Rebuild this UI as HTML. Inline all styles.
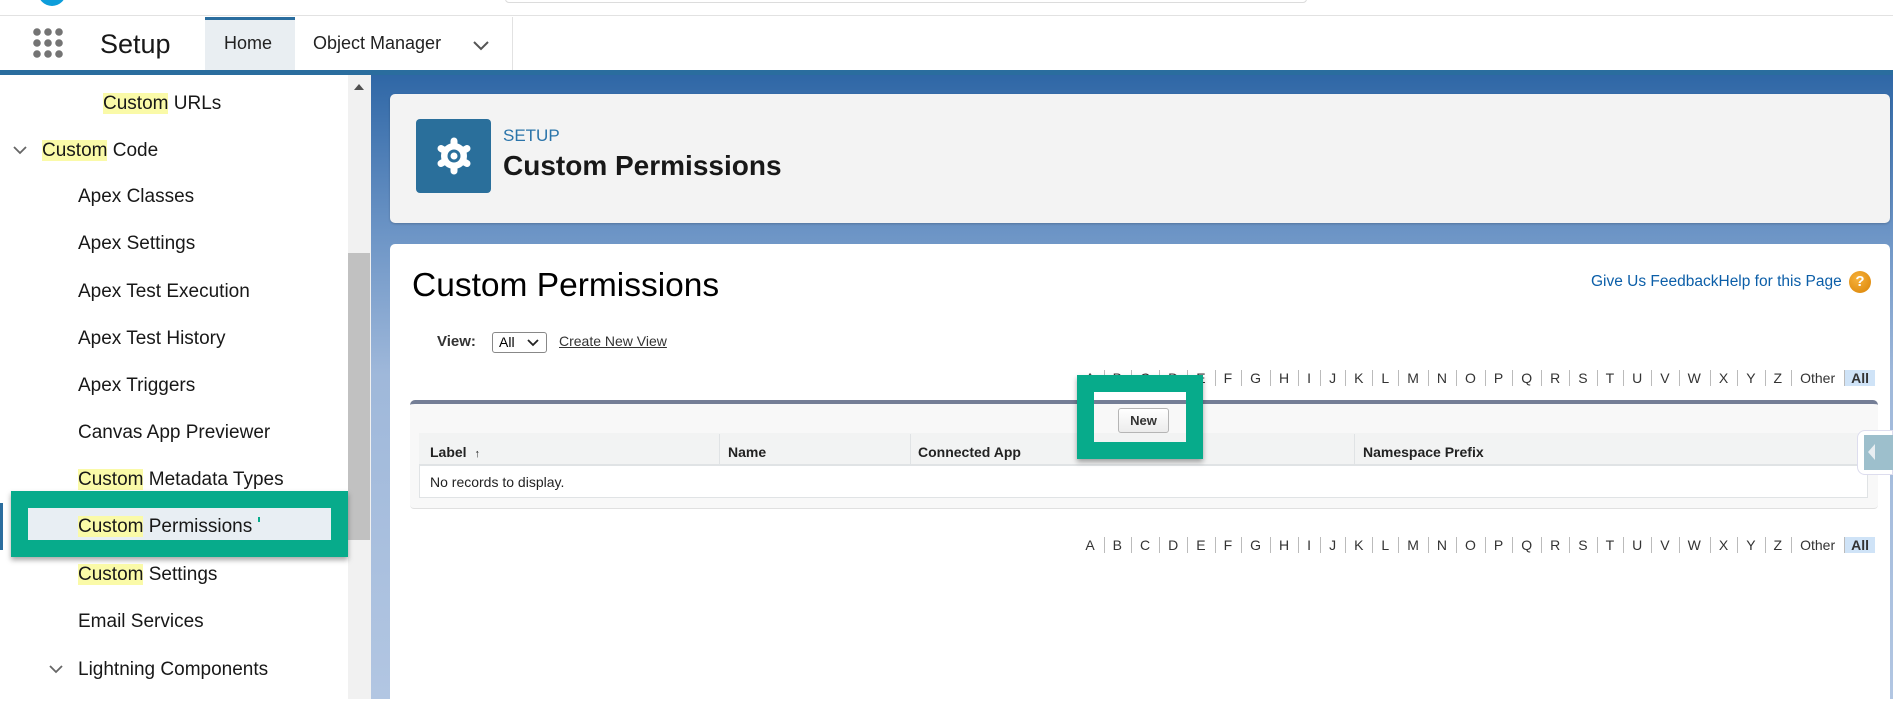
<!DOCTYPE html>
<html><head><meta charset="utf-8"><style>
*{margin:0;padding:0;box-sizing:border-box}
body{width:1893px;height:699px;overflow:hidden;position:relative;font-family:"Liberation Sans",Arial,sans-serif;background:#fff}
.a{position:absolute}
.side{font-size:19px;color:#181818;white-space:nowrap;line-height:24px}
.hl{background:#fafaa8}
.alpha{font-size:14px;color:#333;white-space:nowrap;line-height:20px}
.alpha span{padding:0 9px 0 8px;border-right:1px solid #bbb}
.alpha span:last-child{border:none;background:#cfe3f7;font-weight:bold;padding:0 6px}
.th{font-size:14px;font-weight:bold;color:#222;top:444px;line-height:16px}
</style></head><body>
<div class="a" style="left:0;top:0;width:1893px;height:16px;background:#fff;border-bottom:1px solid #e2e2e2"></div>
<div class="a" style="left:38px;top:-22px;width:28px;height:28px;border-radius:50%;background:#0d9dda"></div>
<div class="a" style="left:505px;top:-10px;width:802px;height:13px;border:1px solid #dcdcdc;border-radius:4px"></div>
<div class="a" style="left:0;top:70px;width:1893px;height:5px;background:#2a6d9e"></div>
<svg class="a" style="left:33px;top:28px" width="32" height="32">
<g fill="#747474"><circle cx="4" cy="4" r="3.8"/><circle cx="15" cy="4" r="3.8"/><circle cx="26" cy="4" r="3.8"/><circle cx="4" cy="15" r="3.8"/><circle cx="15" cy="15" r="3.8"/><circle cx="26" cy="15" r="3.8"/><circle cx="4" cy="26" r="3.8"/><circle cx="15" cy="26" r="3.8"/><circle cx="26" cy="26" r="3.8"/></g></svg>
<div class="a" style="left:100px;top:29px;font-size:27px;color:#181818">Setup</div>
<div class="a" style="left:205px;top:17px;width:90px;height:53px;background:#e9eef2;border-top:3px solid #2a6d9e"></div>
<div class="a" style="left:224px;top:33px;font-size:18px;color:#222">Home</div>
<div class="a" style="left:313px;top:33px;font-size:18px;color:#222">Object Manager</div>
<svg class="a" style="left:472px;top:40px" width="18" height="12"><path d="M2 2 L9 9 L16 2" fill="none" stroke="#555" stroke-width="2"/></svg>
<div class="a" style="left:512px;top:17px;width:1px;height:53px;background:#e2e2e2"></div>
<div class="a" style="left:371px;top:75px;width:1522px;height:624px;background:linear-gradient(#2f67a6 0px,#6d95c6 160px,#9fb8da 300px,#b2c6e2 624px)"></div>
<div class="a" style="left:0;top:75px;width:371px;height:624px;background:#fff"></div>
<div class="a" style="left:348px;top:75px;width:23px;height:624px;background:#f1f1f1"></div>
<div class="a" style="left:348px;top:253px;width:22px;height:287px;background:#c1c1c1"></div>
<svg class="a" style="left:353px;top:82px" width="12" height="10"><path d="M1 8 L6 2 L11 8Z" fill="#505050"/></svg>
<div class="a side" style="left:103px;top:92px"><span class="hl">Custom</span> URLs</div>
<svg class="a" style="left:12px;top:145px" width="16" height="12"><path d="M2 2 L8 8 L14 2" fill="none" stroke="#666" stroke-width="1.8"/></svg>
<div class="a side" style="left:42px;top:139px"><span class="hl">Custom</span> Code</div>
<div class="a side" style="left:78px;top:185px">Apex Classes</div>
<div class="a side" style="left:78px;top:232px">Apex Settings</div>
<div class="a side" style="left:78px;top:280px">Apex Test Execution</div>
<div class="a side" style="left:78px;top:327px">Apex Test History</div>
<div class="a side" style="left:78px;top:374px">Apex Triggers</div>
<div class="a side" style="left:78px;top:421px">Canvas App Previewer</div>
<div class="a side" style="left:78px;top:468px"><span class="hl">Custom</span> Metadata Types</div>
<div class="a" style="left:0;top:503px;width:3px;height:47px;background:#2a6d9e"></div>
<div class="a" style="left:11px;top:491px;width:337px;height:66px;border:17px solid #07ab8b;background:#e8eef3;box-shadow:0 3px 5px rgba(0,0,0,.35)"></div>
<div class="a side" style="left:78px;top:515px"><span class="hl">Custom</span> Permissions</div>
<div class="a" style="left:258px;top:517px;width:2px;height:5px;background:#07ab8b"></div>
<div class="a side" style="left:78px;top:563px"><span class="hl">Custom</span> Settings</div>
<div class="a side" style="left:78px;top:610px">Email Services</div>
<svg class="a" style="left:48px;top:664px" width="16" height="12"><path d="M2 2 L8 8 L14 2" fill="none" stroke="#666" stroke-width="1.8"/></svg>
<div class="a side" style="left:78px;top:658px">Lightning Components</div>
<div class="a" style="left:390px;top:94px;width:1500px;height:129px;background:#f3f3f3;border-radius:5px;box-shadow:0 1px 2px rgba(0,0,0,.2)"></div>
<div class="a" style="left:416px;top:119px;width:75px;height:74px;background:#2a6f9b;border-radius:4px"></div>
<svg class="a" style="left:432px;top:134px" width="44" height="44" viewBox="0 0 44 44">
<g fill="#fff"><circle cx="22" cy="22" r="13"/>
<g stroke="#fff" stroke-width="7" stroke-linecap="round"><path d="M22 7 V10"/><path d="M22 34 V37"/><path d="M9 14.5 L11.6 16"/><path d="M32.4 28 L35 29.5"/><path d="M9 29.5 L11.6 28"/><path d="M32.4 16 L35 14.5"/></g></g>
<circle cx="22" cy="22" r="6.5" fill="#2a6f9b"/><circle cx="22" cy="22" r="3.5" fill="#fff"/></svg>
<div class="a" style="left:503px;top:126px;font-size:17px;color:#2a74aa">SETUP</div>
<div class="a" style="left:503px;top:150px;font-size:28px;font-weight:bold;color:#181818">Custom Permissions</div>
<div class="a" style="left:390px;top:244px;width:1500px;height:460px;background:#fff;border-radius:5px"></div>
<div class="a" style="left:412px;top:267px;font-size:33.5px;color:#000">Custom Permissions</div>
<div class="a" style="left:1591px;top:273px;font-size:15.5px;color:#0b5ea8">Give Us FeedbackHelp for this Page</div>
<div class="a" style="left:1849px;top:271px;width:22px;height:22px;border-radius:50%;background:radial-gradient(circle at 40% 35%,#f7b23c,#d98204);color:#fff;font-size:15px;font-weight:bold;text-align:center;line-height:22px">?</div>
<div class="a" style="left:437px;top:333px;font-size:15px;font-weight:bold;color:#333">View:</div>
<div class="a" style="left:492px;top:332px;width:55px;height:21px;border:1px solid #888;border-radius:3px;font-size:14px;padding-left:6px;line-height:19px">All</div>
<svg class="a" style="left:526px;top:338px" width="14" height="10"><path d="M2 2 L7 7 L12 2" fill="none" stroke="#222" stroke-width="1.8"/></svg>
<div class="a" style="left:559px;top:333px;font-size:14px;color:#333;text-decoration:underline">Create New View</div>
<div class="a alpha" style="right:18px;top:368px"><span>A</span><span>B</span><span>C</span><span>D</span><span>E</span><span>F</span><span>G</span><span>H</span><span>I</span><span>J</span><span>K</span><span>L</span><span>M</span><span>N</span><span>O</span><span>P</span><span>Q</span><span>R</span><span>S</span><span>T</span><span>U</span><span>V</span><span>W</span><span>X</span><span>Y</span><span>Z</span><span>Other</span><span>All</span></div>
<div class="a alpha" style="right:18px;top:535px"><span>A</span><span>B</span><span>C</span><span>D</span><span>E</span><span>F</span><span>G</span><span>H</span><span>I</span><span>J</span><span>K</span><span>L</span><span>M</span><span>N</span><span>O</span><span>P</span><span>Q</span><span>R</span><span>S</span><span>T</span><span>U</span><span>V</span><span>W</span><span>X</span><span>Y</span><span>Z</span><span>Other</span><span>All</span></div>
<div class="a" style="left:410px;top:400px;width:1468px;height:109px;background:#f8f8f8;border-top:4px solid #747e96;border-radius:5px 5px 4px 4px;border-bottom:1px solid #e0e0e0"></div>
<div class="a" style="left:1118px;top:408px;width:51px;height:25px;border:1px solid #b5b5b5;border-radius:3px;background:linear-gradient(#fff,#ececec);font-size:13px;font-weight:bold;text-align:center;line-height:23px;color:#333">New</div>
<div class="a" style="left:419px;top:433px;width:1449px;height:65px;border:1px solid #e0e3e5;background:#fff"></div>
<div class="a" style="left:419px;top:433px;width:1449px;height:33px;background:#f2f3f3;border-bottom:2px solid #e0e3e5"></div>
<div class="a" style="left:719px;top:434px;width:1px;height:32px;background:#e0e3e5"></div>
<div class="a" style="left:910px;top:434px;width:1px;height:32px;background:#e0e3e5"></div>
<div class="a" style="left:1354px;top:434px;width:1px;height:32px;background:#e0e3e5"></div>
<div class="a th" style="left:430px">Label <span style="font-size:11px;margin-left:4px">&#8593;</span></div>
<div class="a th" style="left:728px">Name</div>
<div class="a th" style="left:918px">Connected App</div>
<div class="a th" style="left:1363px">Namespace Prefix</div>
<div class="a" style="left:430px;top:474px;font-size:14px;color:#222">No records to display.</div>
<div class="a" style="left:1857px;top:430px;width:36px;height:45px;border:1px solid #dde;border-radius:8px 0 0 8px;background:#fff"></div>
<div class="a" style="left:1864px;top:435px;width:29px;height:35px;background:#9dbfcc"></div>
<svg class="a" style="left:1866px;top:443px" width="10" height="18"><path d="M9 1 L2 9 L9 17Z" fill="#e8eef2"/></svg>
<div class="a" style="left:1077px;top:375px;width:126px;height:84px;border:17px solid #07ab8b;box-shadow:0 3px 5px rgba(0,0,0,.35)"></div>
</body></html>
